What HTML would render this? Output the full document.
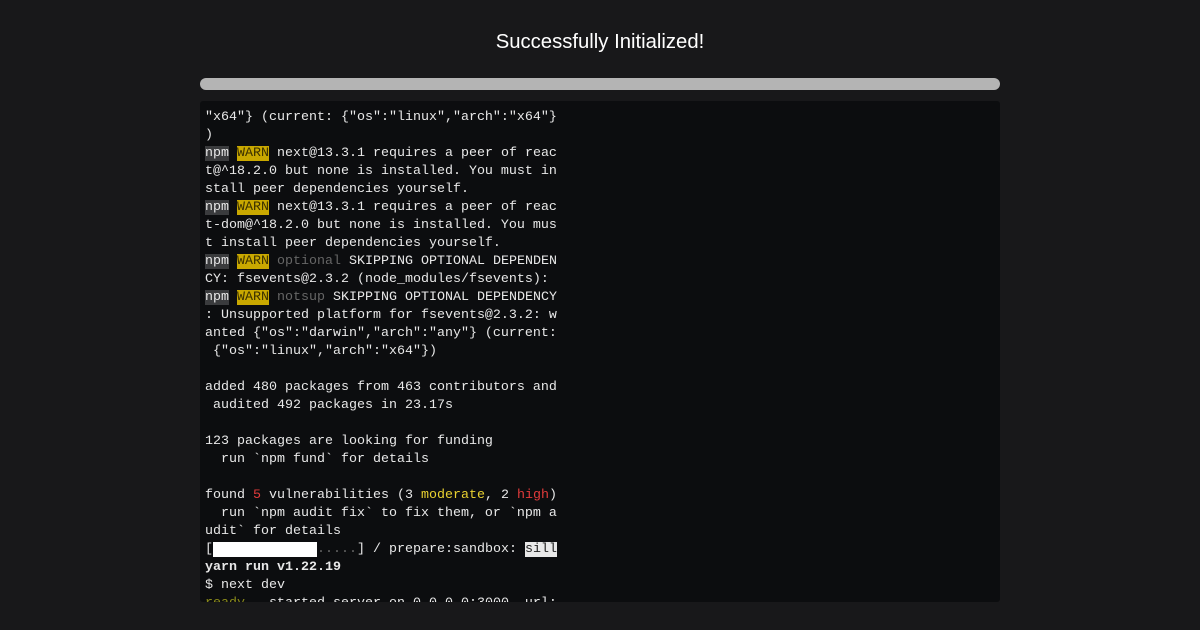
<!DOCTYPE html>
<html><head><style>
body{margin:0;width:1200px;height:630px;background:#18181a;overflow:hidden;font-family:"Liberation Sans",sans-serif}
h1{position:absolute;top:31px;left:0;width:1200px;text-align:center;margin:0;font-weight:normal;font-size:20.3px;color:#fff}
.bar{position:absolute;left:200px;top:78px;width:800px;height:12px;border-radius:6px;background:#b4b4b4}
.term{position:absolute;left:200px;top:101px;width:800px;height:501px;background:#0c0d0f;border-radius:3px;overflow:hidden}
pre{margin:0;position:absolute;left:5px;top:8px;font-family:"Liberation Mono",monospace;font-size:13.33px;line-height:18px;color:#e8e8e8}
.n{background:#3a3b3d}.w{background:#c9a800;color:#3a3000}.g{color:#666}.r{color:#e23b3b}.y{color:#e8d030}.wb{background:#fff}.sl{background:#e8e8e8;color:#222}.gr{color:#8a8a1a}
</style></head><body>
<h1>Successfully Initialized!</h1>
<div class="bar"></div>
<div class="term"><pre>"x64"} (current: {"os":"linux","arch":"x64"}
)
<span class="n">npm</span> <span class="w">WARN</span> next@13.3.1 requires a peer of reac
t@^18.2.0 but none is installed. You must in
stall peer dependencies yourself.
<span class="n">npm</span> <span class="w">WARN</span> next@13.3.1 requires a peer of reac
t-dom@^18.2.0 but none is installed. You mus
t install peer dependencies yourself.
<span class="n">npm</span> <span class="w">WARN</span> <span class="g">optional</span> SKIPPING OPTIONAL DEPENDEN
CY: fsevents@2.3.2 (node_modules/fsevents):
<span class="n">npm</span> <span class="w">WARN</span> <span class="g">notsup</span> SKIPPING OPTIONAL DEPENDENCY
: Unsupported platform for fsevents@2.3.2: w
anted {"os":"darwin","arch":"any"} (current:
 {"os":"linux","arch":"x64"})

added 480 packages from 463 contributors and
 audited 492 packages in 23.17s

123 packages are looking for funding
  run `npm fund` for details

found <span class="r">5</span> vulnerabilities (3 <span class="y">moderate</span>, 2 <span class="r">high</span>)
  run `npm audit fix` to fix them, or `npm a
udit` for details
[<span class="wb">             </span><span class="g">.....</span>] / prepare:sandbox: <span class="sl">sill</span>
<b>yarn run v1.22.19</b>
$ next dev
<span class="gr">ready</span> - started server on 0.0.0.0:3000, url:</pre></div>
</body></html>
